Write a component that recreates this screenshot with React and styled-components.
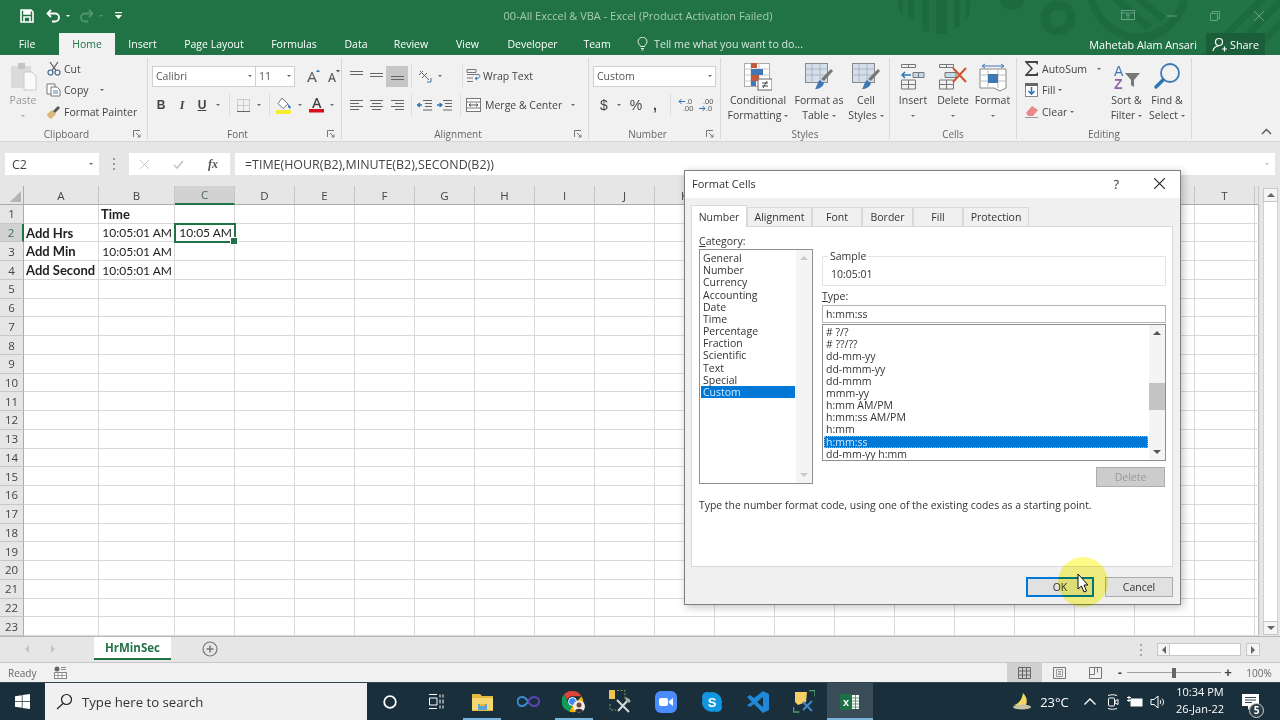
import React from 'react';
import styled, { createGlobalStyle } from 'styled-components';

const ui = '"Open Sans", "Noto Sans", sans-serif';

const Global = createGlobalStyle`
  html, body { margin: 0; padding: 0; width: 1280px; height: 720px; overflow: hidden; background: #e6e6e6; }
  * { box-sizing: border-box; }
  body { font-family: ${ui}; }
`;

const Page = styled.div`
  position: relative;
  width: 1280px;
  height: 720px;
  display: flex;
  flex-direction: column;
  overflow: hidden;
  background: #e6e6e6;
  color: #444;
`;

/* title + tabs */
const GreenHead = styled.header`
  position: relative;
  height: 55px;
  background: #217346;
  overflow: hidden;
`;
const TitleRow = styled.div`
  position: relative;
  height: 31px;
  display: grid;
  grid-template-columns: 1fr auto 1fr;
  align-items: center;
  padding-right: 4px;
`;
const Qat = styled.div`
  display: flex;
  align-items: center;
  padding-left: 18px;
`;
const Slot = styled.div`
  width: ${p => p.$w}px;
  height: ${p => (p.$h ? `${p.$h}px` : 'auto')};
  flex: none;
  display: flex;
  align-items: center;
  justify-content: center;
  background: ${p => p.$bg || 'transparent'};
`;
const DocTitle = styled.div`
  font-size: 11px;
  color: #a6cbb5;
  white-space: nowrap;
`;
const WinControls = styled.div`
  display: flex;
  justify-content: flex-end;
  margin-right: -4px;
`;
const TabRow = styled.nav`
  position: relative;
  height: 24px;
  display: flex;
  align-items: flex-end;
`;
const RibbonTab = styled.div`
  width: ${p => p.$w}px;
  margin-right: ${p => p.$mr || 0}px;
  height: 22px;
  display: flex;
  align-items: center;
  justify-content: center;
  font-size: 10.5px;
  color: ${p => (p.$active ? '#217346' : '#fff')};
  background: ${p => (p.$active ? '#f1f1f1' : 'transparent')};
`;
const TellMe = styled.div`
  display: flex;
  align-items: center;
  gap: 6px;
  height: 22px;
  margin-left: 13px;
  font-size: 10.7px;
  color: #d6e6dc;
`;
const Account = styled.div`
  margin-left: auto;
  display: flex;
  align-items: center;
  height: 22px;
  padding-right: 15px;
  font-size: 10.8px;
  color: #fff;
`;
const Share = styled.div`
  display: flex;
  align-items: center;
  justify-content: center;
  gap: 3px;
  width: 59px;
  height: 22px;
  margin-left: 9px;
  background: #1b5f3a;
`;

/* ribbon */
const Ribbon = styled.section`
  position: relative;
  height: 87px;
  padding-top: 3px;
  display: flex;
  background: #f1f1f1;
  border-bottom: 1px solid #d6d6d6;
`;
const Group = styled.div`
  width: ${p => p.$w}px;
  height: 81px;
  flex: none;
  display: flex;
  flex-direction: column;
  border-right: 1px solid #d8d8d8;
`;
const GroupBody = styled.div`
  height: 69px;
  flex: none;
  display: flex;
  padding-left: ${p => p.$pl || 0}px;
`;
const GroupLabel = styled.div`
  display: grid;
  grid-template-columns: 1fr ${p => (p.$launch ? '14px' : '0')};
  align-items: center;
  height: 12px;
  font-size: 10px;
  color: #666;
  text-align: center;
`;
const BigButton = styled.div`
  width: ${p => p.$w}px;
  flex: none;
  display: flex;
  flex-direction: column;
  align-items: center;
  padding-top: 4px;
  font-size: 10.5px;
  line-height: 15px;
  color: #444;
  text-align: center;
  white-space: nowrap;
`;
const BigIcon = styled.div`
  height: 31px;
  flex: none;
  padding-top: 1px;
  display: flex;
  align-items: flex-start;
  justify-content: center;
`;
const BigLine = styled.div`
  height: 15px;
  flex: none;
  display: flex;
  align-items: center;
  gap: 3px;
`;
const Faded = styled.span`
  color: #999;
`;
const Stack = styled.div`
  display: flex;
  flex-direction: column;
  padding-left: ${p => p.$pl || 0}px;
  width: ${p => (p.$w ? `${p.$w}px` : 'auto')};
  flex: none;
`;
const SmallRow = styled.div`
  height: 21.5px;
  display: flex;
  align-items: center;
  gap: 3px;
  font-size: 10.5px;
  color: #444;
  white-space: nowrap;
`;
const Rows = styled.div`
  display: flex;
  flex-direction: column;
  padding-top: 7px;
  gap: 7px;
`;
const ToolRow = styled.div`
  display: flex;
  align-items: center;
  height: 22px;
  font-size: 10.5px;
  color: #444;
  white-space: nowrap;
  margin-left: ${p => p.$ml || 0}px;
`;
const Combo = styled.div`
  width: ${p => p.$w}px;
  height: 21px;
  flex: none;
  display: flex;
  align-items: center;
  justify-content: space-between;
  padding: 0 3px;
  background: #fff;
  border: 1px solid #d0d0d0;
  margin-left: ${p => (p.$joined ? '-1px' : '0')};
  font-size: 10.5px;
  color: #555;
`;
const Sep = styled.div`
  width: 1px;
  height: 22px;
  background: #dcdcdc;
`;
const Glyph = styled.span`
  font: ${p => (p.$italic ? 'italic' : 'normal')} ${p => p.$weight || 700} ${p => p.$size || 12}px ${p => p.$font || '"Liberation Serif", serif'};
  text-decoration: ${p => (p.$under ? 'underline' : 'none')};
  color: ${p => p.$color || '#444'};
`;
const CollapseSlot = styled.div`
  width: 88px;
  flex: none;
  height: 81px;
  display: flex;
  align-items: flex-end;
  padding: 0 0 4px 69px;
`;

/* formula bar */
const FormulaBar = styled.div`
  display: flex;
  height: 22px;
  margin: 11px 5px;
`;
const WhiteBox = styled.div`
  width: ${p => (p.$w ? `${p.$w}px` : 'auto')};
  flex: ${p => (p.$w ? 'none' : 1)};
  margin-left: ${p => p.$ml || 0}px;
  display: flex;
  align-items: center;
  justify-content: space-between;
  padding: 0 ${p => p.$pr ?? 6}px 0 ${p => p.$pl ?? 6}px;
  background: #fff;
  font: 12.45px ${ui};
  color: #444;
`;

/* sheet */
const SheetArea = styled.div`
  height: 450px;
  display: flex;
`;
const Sheet = styled.div`
  width: 1259px;
  height: 450px;
  display: grid;
  grid-template-columns: 24px 75px 76px repeat(18, 60px) 4px;
  grid-template-rows: 19px repeat(23, 1fr);
  background: #fff;
  border-right: 1px solid #c0c0c0;
  font-family: Lato, "Liberation Sans", sans-serif;
  color: #222;
`;
const Corner = styled.div`
  display: flex;
  align-items: flex-end;
  justify-content: flex-end;
  padding: 0 2px 2px 0;
  background: #e6e6e6;
  border-right: 1px solid #ababab;
  border-bottom: 1px solid #ababab;
`;
const ColHead = styled.div`
  display: flex;
  align-items: center;
  justify-content: center;
  font: 11.5px ${ui};
  color: ${p => (p.$active ? '#3f6f55' : '#444')};
  background: ${p => (p.$active ? '#d2d2d2' : '#e6e6e6')};
  border-right: 1px solid #c6c6c6;
  border-bottom: ${p => (p.$active ? '2px solid #217346' : '1px solid #ababab')};
`;
const RowHead = styled.div`
  display: flex;
  align-items: center;
  justify-content: center;
  font: 11.5px ${ui};
  color: ${p => (p.$active ? '#3f6f55' : '#444')};
  background: ${p => (p.$active ? '#d2d2d2' : '#e6e6e6')};
  border-bottom: 1px solid #c6c6c6;
  border-right: ${p => (p.$active ? '2px solid #217346' : '1px solid #ababab')};
`;
const Cell = styled.div`
  position: relative;
  display: flex;
  align-items: center;
  justify-content: ${p => (p.$right ? 'flex-end' : 'flex-start')};
  padding: 0 2px;
  font-size: ${p => (p.$bold ? 13 : 12)}px;
  font-weight: ${p => (p.$bold ? 700 : 400)};
  white-space: nowrap;
  border-right: 1px solid #d9d9d9;
  border-bottom: 1px solid #d9d9d9;
  ${p =>
    p.$selected &&
    `
    outline: 2px solid #217346;
    outline-offset: -1px;
    z-index: 1;
    &::after {
      content: '';
      position: absolute;
      right: -4px;
      bottom: -4px;
      width: 6px;
      height: 6px;
      background: #217346;
      border: 1px solid #fff;
    }
  `}
`;
const VScroll = styled.div`
  width: 15px;
  height: 447px;
  margin: 2px 0 0 4px;
  display: flex;
  flex-direction: column;
  justify-content: space-between;
  background: #fff;
  border: 1px solid #d0d0d0;
`;
const ScrollCap = styled.div`
  height: 14px;
  display: flex;
  align-items: center;
  justify-content: center;
  background: #f5f5f5;
  border: 1px solid #c8c8c8;
  margin: -1px;
`;
const Triangle = styled.i`
  width: 0;
  height: 0;
  border-left: ${p => p.$s || 4}px solid transparent;
  border-right: ${p => p.$s || 4}px solid transparent;
  ${p => (p.$up ? 'border-bottom' : 'border-top')}: ${p => p.$s || 4}px solid ${p => p.$c || '#666'};
`;
const Side = styled.i`
  width: 0;
  height: 0;
  border-top: 4px solid transparent;
  border-bottom: 4px solid transparent;
  ${p => (p.$left ? 'border-right' : 'border-left')}: 4px solid ${p => p.$c || '#666'};
`;

/* sheet tabs and status */
const SheetBar = styled.div`
  height: 26px;
  display: flex;
  align-items: flex-start;
  padding-left: 14px;
  background: #e6e6e6;
  border-top: 1px solid #b8b8b8;
`;
const SheetTab = styled.div`
  width: 77px;
  height: 23px;
  margin-left: 28px;
  display: flex;
  align-items: center;
  justify-content: center;
  background: #fff;
  border-bottom: 2px solid #217346;
  font-size: 11.5px;
  font-weight: 700;
  color: #217346;
`;
const HScroll = styled.div`
  display: flex;
  align-items: center;
  margin-left: auto;
  margin-right: 20px;
  height: 13px;
  margin-top: 6px;
`;
const HCap = styled.div`
  width: ${p => p.$w}px;
  height: 13px;
  display: flex;
  align-items: center;
  justify-content: center;
  background: #f5f5f5;
  border: 1px solid #c8c8c8;
`;
const HTrack = styled.div`
  width: 71px;
  height: 13px;
  margin-right: 5px;
  background: #fff;
  border: 1px solid #c8c8c8;
  border-left: 0;
`;
const StatusBar = styled.div`
  height: 20px;
  display: flex;
  align-items: center;
  background: #f1f1f1;
  border-top: 1px solid #c8c8c8;
  font-size: 10px;
  color: #666;
`;
const Ready = styled.span`
  width: 54px;
  padding-left: 8px;
`;
const StatusRight = styled.div`
  margin-left: auto;
  display: flex;
  align-items: center;
  height: 100%;
`;
const ViewButton = styled.div`
  width: ${p => p.$w}px;
  height: 100%;
  display: flex;
  align-items: center;
  justify-content: center;
  background: ${p => (p.$active ? '#d0d0d0' : 'transparent')};
`;
const ZoomTrack = styled.div`
  width: 94px;
  display: flex;
  align-items: center;
`;
const ZoomLine = styled.div`
  flex: ${p => p.$grow};
  height: 1px;
  background: #a0a0a0;
`;
const ZoomThumb = styled.div`
  width: 4px;
  height: 10px;
  background: #666;
`;
const Percent = styled.span`
  width: 45px;
  padding-left: 3px;
  text-align: center;
`;

/* taskbar */
const Taskbar = styled.footer`
  height: 38px;
  display: flex;
  align-items: stretch;
  background: #192f3b;
  border-top: 1px solid #33454f;
`;
const Search = styled.div`
  width: 322px;
  display: flex;
  align-items: center;
  gap: 9px;
  padding-left: 11px;
  background: #f0f0f0;
  font-size: 13.2px;
  color: #333;
`;
const TaskIcon = styled.div`
  position: relative;
  width: 46px;
  display: flex;
  align-items: center;
  justify-content: center;
  background: ${p => (p.$active ? '#3a4c57' : 'transparent')};
  ${p =>
    p.$running &&
    `
    &::after {
      content: '';
      position: absolute;
      left: ${p.$active ? 0 : 4}px;
      right: ${p.$active ? 0 : 4}px;
      bottom: 0;
      height: 2px;
      background: #79b4dc;
    }
  `}
`;
const Tray = styled.div`
  margin-left: auto;
  display: flex;
  align-items: center;
  padding-right: 8px;
  color: #fff;
`;
const Temp = styled(Slot)`
  font-size: 13px;
`;
const Clock = styled.div`
  width: 62px;
  padding-left: 6px;
  margin-bottom: 4px;
  text-align: center;
  font-size: 11px;
  line-height: 17px;
`;
const Notify = styled.div`
  position: relative;
  width: 44px;
  display: flex;
  align-items: center;
  justify-content: center;
`;
const NotifyBadge = styled.span`
  position: absolute;
  left: 21px;
  top: 9px;
  width: 15px;
  height: 15px;
  border-radius: 50%;
  display: flex;
  align-items: center;
  justify-content: center;
  background: #2a3c47;
  border: 1px solid #cfcfcf;
  font-size: 10px;
  font-weight: 700;
  color: #fff;
`;

/* dialog */
const Dialog = styled.div`
  position: absolute;
  left: 684px;
  top: 170px;
  width: 497px;
  height: 435px;
  display: flex;
  flex-direction: column;
  background: #f0f0f0;
  border: 1px solid #7f7f7f;
  box-shadow: 2px 2px 8px rgba(0, 0, 0, 0.25);
  font-size: 10.5px;
  color: #333;
  z-index: 2;
`;
const DialogHead = styled.div`
  height: 27px;
  flex: none;
  display: flex;
  align-items: center;
  padding: 0 0 2px 7px;
  background: #fff;
  font-size: 11px;
`;
const HeadIcons = styled.div`
  margin-left: auto;
  display: flex;
  align-items: center;
  gap: 35px;
  padding-right: 15px;
  font-size: 13px;
`;
const DialogTabs = styled.div`
  height: 28px;
  flex: none;
  display: flex;
  align-items: flex-end;
  margin-left: 6px;
`;
const DialogTab = styled.div`
  width: ${p => p.$w}px;
  height: ${p => (p.$active ? 22 : 19)}px;
  display: flex;
  align-items: center;
  justify-content: center;
  background: ${p => (p.$active ? '#fff' : '#f0f0f0')};
  border: 1px solid #d9d9d9;
  border-bottom: 0;
  margin-bottom: ${p => (p.$active ? -1 : 0)}px;
  position: relative;
  z-index: ${p => (p.$active ? 1 : 0)};
`;
const Panel = styled.div`
  height: 341px;
  flex: none;
  margin: 0 7px 0 6px;
  padding: 7px 6px 0 7px;
  display: grid;
  grid-template-columns: 114px 344px;
  grid-template-rows: auto 1fr;
  column-gap: 9px;
  align-content: start;
  background: #fff;
  border: 1px solid #d9d9d9;
`;
const Label = styled.div`
  height: ${p => p.$h || 15}px;
  margin-top: ${p => p.$mt || 0}px;
  margin-bottom: ${p => p.$mb || 0}px;
  display: flex;
  align-items: center;
  u { text-underline-offset: 1px; }
`;
const ListBox = styled.div`
  height: ${p => p.$h}px;
  display: flex;
  background: #fff;
  border: 1px solid #8f8f8f;
  margin-top: ${p => p.$mt || 0}px;
`;
const Items = styled.div`
  flex: 1;
  padding: ${p => p.$pt}px 1px 0 1px;
  overflow: hidden;
`;
const Item = styled.div`
  height: 12.18px;
  line-height: 12.18px;
  padding-left: ${p => p.$pl || 2}px;
  white-space: nowrap;
  background: ${p => (p.$selected ? '#0078d7' : 'transparent')};
  color: ${p => (p.$selected ? '#cfe8ff' : '#333')};
  outline: ${p => (p.$focused ? '1px dotted #9fb8cc' : 'none')};
  outline-offset: -1px;
`;
const ListScroll = styled.div`
  width: 16px;
  flex: none;
  display: flex;
  flex-direction: column;
  background: #f4f4f4;
`;
const ScrollArrow = styled.div`
  height: 16px;
  display: flex;
  align-items: center;
  justify-content: center;
`;
const ScrollTrack = styled.div`
  flex: 1;
  padding-top: ${p => p.$top || 0}px;
`;
const ScrollThumb = styled.div`
  height: 27px;
  background: #c4c4c4;
`;
const Fieldset = styled.fieldset`
  height: 37px;
  margin: 15px 0 0;
  padding: 0 7px;
  border: 1px solid #e3e3e3;
  font-size: 10.5px;
  legend { padding: 0 2px; margin-left: -2px; line-height: 14px; }
`;
const SampleValue = styled.div`
  line-height: 14px;
  margin-top: 4px;
  margin-left: 1px;
`;
const TypeInput = styled.div`
  height: 18px;
  margin-top: 2px;
  padding-left: 3px;
  display: flex;
  align-items: center;
  border: 1px solid #b5b5b5;
`;
const PushButton = styled.div`
  width: ${p => p.$w || 68}px;
  height: 20px;
  flex: none;
  display: flex;
  align-items: center;
  justify-content: center;
  background: ${p => (p.$disabled ? '#cccccc' : '#e1e1e1')};
  color: ${p => (p.$disabled ? '#9a9a9a' : '#333')};
  border: ${p => (p.$primary ? '2px solid #0078d7' : '1px solid #adadad')};
  margin-left: ${p => p.$ml || 0}px;
`;
const DeleteRow = styled.div`
  display: flex;
  justify-content: flex-end;
  margin-top: 6px;
  padding-right: 1px;
`;
const Hint = styled.div`
  grid-column: 1 / -1;
  margin-top: 11px;
  font-size: 10.42px;
  line-height: 14px;
`;
const DialogFoot = styled.div`
  flex: 1;
  display: flex;
  justify-content: flex-end;
  padding: 10px 7px 0 0;
`;
const Spotlight = styled.div`
  position: absolute;
  left: 1058px;
  top: 557px;
  width: 50px;
  height: 50px;
  border-radius: 50%;
  background: #fdfb86;
  mix-blend-mode: multiply;
  z-index: 3;
`;
const Cursor = styled.svg`
  position: absolute;
  left: 1077px;
  top: 573px;
  z-index: 4;
`;

/* icons */
const Arrow = ({ c = '#666' }) => <Triangle $s={2.5} $c={c} />;

const SaveIcon = () => (
  <svg width="18" height="18" viewBox="0 0 18 18" fill="none" stroke="#fff" strokeWidth="1.6">
    <path d="M3 3h10l2 2v10H3z" />
    <path d="M6 3v4h6V3" fill="#fff" />
    <path d="M6 15v-5h6v5" />
  </svg>
);
const UndoIcon = ({ c = '#fff' }) => (
  <svg width="16" height="14" viewBox="0 0 16 14" fill="none" stroke={c} strokeWidth="1.8">
    <path d="M5 1L1.5 4.5 5 8" />
    <path d="M2 4.5h7a4 4 0 0 1 0 8H6" />
  </svg>
);
const RedoIcon = () => (
  <svg width="16" height="14" viewBox="0 0 16 14" fill="none" stroke="#4f9570" strokeWidth="1.8">
    <path d="M11 1l3.5 3.5L11 8" />
    <path d="M14 4.5H7a4 4 0 0 0 0 8h3" />
  </svg>
);
const QatMore = () => (
  <svg width="7" height="8" viewBox="0 0 7 8">
    <path d="M0 0h7v1.3H0zM0 3h7L3.5 7z" fill="#fff" />
  </svg>
);
const TitleArt = styled.svg`
  position: absolute;
  left: 860px;
  top: 0;
`;
const TitleDecor = () => (
  <TitleArt width="420" height="55" viewBox="0 0 420 55" fill="#1e6a40">
    <path d="M38 0h5v16l-5-6zM48 0h6v22l-6-4zM62 0h7v32l-7-1zM76 0h11v34H76zM94 0h6v26l-6 3zM106 0h4v14l-4 6z" />
    <path d="M140 0h24c0 6-6 10-12 10s-12-4-12-10z" />
    <circle cx="198" cy="18" r="13" fill="none" stroke="#1e6a40" strokeWidth="9" />
    <path d="M228 0c6 22 24 38 50 44 28-4 46-22 50-44h-8c-4 18-20 32-42 34-22-3-38-16-42-34z" />
    <path d="M252 0l34 30 6-5L262 0zM275 0l26 22 5-6L285 0z" />
    <path d="M350 55L406 0h-9l-56 55zM372 55l48-48v-9l-57 57zM394 55l26-26v-9l-35 35z" />
  </TitleArt>
);
const RibbonDisplayIcon = () => (
  <svg width="14" height="11" viewBox="0 0 14 11" fill="none" stroke="#62a382">
    <rect x=".5" y=".5" width="13" height="9" />
    <path d="M.5 3h13M7 9V4.5M5 6l2-2 2 2" />
  </svg>
);
const MinIcon = () => (
  <svg width="10" height="10" viewBox="0 0 10 10">
    <path d="M0 5h10" stroke="#62a382" />
  </svg>
);
const RestoreIcon = () => (
  <svg width="10" height="10" viewBox="0 0 10 10" fill="none" stroke="#62a382">
    <path d="M.5 2.5h7v7h-7zM2.5 2.5v-2h7v7h-2" />
  </svg>
);
const CloseIcon = ({ c = '#62a382', s = 10 }) => (
  <svg width={s} height={s} viewBox="0 0 10 10" stroke={c}>
    <path d="M0 0l10 10M10 0L0 10" />
  </svg>
);
const BulbIcon = () => (
  <svg width="11" height="14" viewBox="0 0 11 14" fill="none" stroke="#e4eee8">
    <path d="M3.5 9.5C3 7.5 1 7 1 4.7a4.5 4.5 0 0 1 9 0c0 2.3-2 2.8-2.5 4.8zM4 11.5h3M4.5 13h2" />
  </svg>
);
const ShareIcon = () => (
  <svg width="15" height="15" viewBox="0 0 15 15" fill="none" stroke="#fff" strokeWidth="1.2">
    <circle cx="7" cy="5" r="3.5" />
    <path d="M1 14c.5-3 2.5-5 6-5M10 12h5M12.5 9.5v5" />
  </svg>
);
const PasteIcon = () => (
  <svg width="28" height="28" viewBox="0 0 28 28">
    <rect x="2" y="3" width="20" height="22" fill="#dadada" />
    <rect x="9" y="0" width="7" height="6" fill="#c4c4c4" />
    <path d="M15 9h8l4 4v14H15z" fill="#fafafa" stroke="#cacaca" />
  </svg>
);
const CutIcon = () => (
  <svg width="14" height="15" viewBox="0 0 14 15" fill="none" stroke="#44658c" strokeWidth="1.2">
    <circle cx="3.5" cy="11.5" r="2.5" />
    <circle cx="10.5" cy="11.5" r="2.5" />
    <path d="M5 9.5L11 1M9 9.5L3 1" stroke="#555" />
  </svg>
);
const CopyIcon = () => (
  <svg width="15" height="14" viewBox="0 0 15 14" fill="#fff" stroke="#777">
    <path d="M1 1h8v10H1z" />
    <path d="M5 4h6l3 3v6H5z" />
    <path d="M7 8h5M7 10h5" stroke="#5a7fa8" />
  </svg>
);
const BrushIcon = () => (
  <svg width="15" height="14" viewBox="0 0 15 14">
    <path d="M1 9l5-4 4 4-5 5C3 13 1 11 1 9z" fill="#d8b978" />
    <path d="M7 6l5-5 2 2-5 5z" fill="#555" />
  </svg>
);
const Launcher = () => (
  <svg width="8" height="8" viewBox="0 0 8 8" fill="none" stroke="#777">
    <path d="M.5 7V.5H7M3 3l4 4M7 4.5V7H4.500" />
  </svg>
);
const BordersIcon = () => (
  <svg width="13" height="13" viewBox="0 0 13 13" fill="none" stroke="#a9a9a9" strokeDasharray="1 1">
    <path d="M.5.5h12v12H.5zM6.500.5v12M.5 6.500h12" />
    <path d="M0 12.500h13" stroke="#666" strokeDasharray="none" />
  </svg>
);
const FillIcon = () => (
  <svg width="16" height="17" viewBox="0 0 16 17">
    <path d="M6 1l6 6-5 4.500-5-5z" fill="#fff" stroke="#777" />
    <path d="M12 7l3 3-1 2-2-2z" fill="#3f78b5" />
    <rect x="0" y="13" width="15" height="4" fill="#f4ee2e" />
  </svg>
);
const FontColorIcon = () => (
  <svg width="15" height="16" viewBox="0 0 15 16">
    <path d="M3 11L7 1h1.500l4 10h-1.800l-1-2.800H5.800l-1 2.800zM6.300 6.800h3L7.800 3z" fill="#444" />
    <rect x="0" y="12" width="15" height="3.500" fill="#d6101c" />
  </svg>
);
const GrowIcon = ({ small }) => (
  <svg width="13" height="14" viewBox="0 0 13 14">
    <path
      d={small ? 'M1 13L4.500 4h1L9 13H7.500l-.8-2.500H3.300L2.500 13zM3.800 9.200h2.500L5 5.500z' : 'M0 13L4.500 3h1L10 13H8.300l-1-2.700H2.700l-1 2.700zM3.200 9h3.600L5 4.600z'}
      fill="#555"
    />
    <path d={small ? 'M9 1h4l-2 2.500z' : 'M9 3l2-2.500L13 3z'} fill={small ? '#555' : '#3f78b5'} />
  </svg>
);
const AlignLines = ({ lines, y = 1 }) => (
  <svg width="13" height="12" viewBox="0 0 13 12" stroke="#666">
    {lines.map(([a, b], i) => (
      <path key={i} d={`M${a} ${y + i * 3 + 0.5}H${b}`} />
    ))}
  </svg>
);
const OrientIcon = () => (
  <svg width="14" height="14" viewBox="0 0 14 14" fill="none" stroke="#666">
    <path d="M2 2l9 9M1 6l4-4M4 9l5-5" />
    <path d="M9 13h4V9" stroke="#3f78b5" />
  </svg>
);
const IndentIcon = ({ rev }) => (
  <svg width="15" height="11" viewBox="0 0 15 11">
    <path d="M6 .5h9M8 3.500h7M8 6.500h7M6 10H15" stroke="#666" />
    <path d={rev ? 'M0 5h5M3 3L.5 5 3 7' : 'M0 5h5M2.500 3L5 5 2.500 7'} stroke="#2e75b6" fill="none" strokeWidth="1.3" />
  </svg>
);
const WrapIcon = () => (
  <svg width="16" height="14" viewBox="0 0 16 14" fill="none" stroke="#777">
    <path d="M1 .5h9v3H1zM1 5.500h12M1 9h6M1 12.500h6" />
    <path d="M13 5.500c2 2 0 4-3 4M11 8l-2 1.500 2 1.500" stroke="#2e75b6" />
  </svg>
);
const MergeIcon = () => (
  <svg width="15" height="14" viewBox="0 0 15 14" fill="#fff" stroke="#777">
    <rect x=".5" y=".5" width="14" height="13" />
    <path d="M.5 4h14M.5 10h14" />
    <path d="M3 7h9M5 5.500L3 7l2 1.500M10 5.500L12 7l-2 1.500" fill="none" stroke="#555" />
  </svg>
);
const DecimalIcon = ({ rev }) => (
  <svg width="18" height="15" viewBox="0 0 18 15" fontFamily="Liberation Sans" fontSize="7.5" fill="#555">
    {rev ? (
      <>
        <text x="6" y="6">.00</text>
        <text x="9" y="13">.0</text>
        <path d="M2 10.500h6M5.500 8l2.500 2.500L5.500 13" stroke="#2e75b6" fill="none" />
      </>
    ) : (
      <>
        <text x="9" y="6">.0</text>
        <text x="6" y="13">.00</text>
        <path d="M8 3.500H2M4.500 1L2 3.500 4.500 6" stroke="#2e75b6" fill="none" />
      </>
    )}
  </svg>
);
const CondFormatIcon = () => (
  <svg width="28" height="28" viewBox="0 0 28 28">
    <rect x=".5" y=".5" width="25" height="23" fill="#fff" stroke="#aaa" />
    <path d="M.5 6h25M.5 12h25M.5 18h25M7 .5v23M15 .5v23" stroke="#c9c9c9" />
    <rect x="7" y="0" width="6" height="5" fill="#c55a3b" />
    <rect x="7" y="6" width="12" height="6" fill="#3f78b5" />
    <rect x="7" y="12" width="8" height="6" fill="#c55a3b" />
    <rect x="7" y="18" width="5" height="5" fill="#3f78b5" />
    <rect x="14" y="16" width="14" height="11" fill="#fff" stroke="#666" />
    <path d="M18 20h6M18 23h6M23 18l-4 7" stroke="#444" />
  </svg>
);
const FormatTableIcon = () => (
  <svg width="28" height="28" viewBox="0 0 28 28">
    <rect x=".5" y=".5" width="22" height="19" fill="#d4dfe9" stroke="#888" />
    <path d="M.5 6h22M.5 12h22M7 .5v19M15 .5v19" stroke="#a9b5bf" />
    <path d="M26 6l2 2-9 10-3-2z" fill="#777" />
    <path d="M15 17l4 3c-1 4-5 6-9 6 2-2 2-7 5-9z" fill="#3f78b5" />
  </svg>
);
const InsertIcon = () => (
  <svg width="26" height="28" viewBox="0 0 26 28" fill="none" stroke="#777">
    <path d="M1.500 1.500h14v3h-14zM8.500 1.500v3M1.500 17h14v9h-14zM1.500 21.500h14M8.500 17v9" />
    <path d="M13 9.500h11v5H13zM18.500 9.500v5" fill="#c6d9ea" />
    <path d="M11 12H2M5 9l-3 3 3 3" stroke="#2e75b6" strokeWidth="1.5" />
  </svg>
);
const DeleteIcon = () => (
  <svg width="30" height="28" viewBox="0 0 30 28" fill="none" stroke="#777">
    <path d="M1.500 1.500h14v3h-14zM8.500 1.500v3M1.500 17h14v9h-14zM1.500 21.500h14M8.500 17v9" />
    <path d="M7 9.500h11v5H7z" fill="#c6d9ea" />
    <path d="M15 5l13 14M28 5L15 19" stroke="#d0532c" strokeWidth="2" />
  </svg>
);
const FormatIcon = () => (
  <svg width="28" height="30" viewBox="0 0 28 30">
    <path d="M1 6h26v19l-6 3-6-3H1z" fill="#fff" stroke="#888" />
    <path d="M1 12h26M1 18h26M9 6v19M19 6v19" stroke="#bbb" />
    <rect x="9" y="11" width="10" height="9" fill="#3f78b5" />
    <path d="M3 3h22M6 1L3 3l3 2M22 1l3 2-3 2" stroke="#3f78b5" fill="none" />
  </svg>
);
const SigmaIcon = () => (
  <svg width="15" height="15" viewBox="0 0 15 15">
    <path d="M1 0h13v3.500h-1L12 2H4l5 5.500L4 13h8l1-1.500h1V15H1v-1l6-6.500L1 1z" fill="#444" />
  </svg>
);
const FillDownIcon = () => (
  <svg width="15" height="14" viewBox="0 0 15 14">
    <rect x="1.500" y=".5" width="12" height="13" fill="#fff" stroke="#888" />
    <rect x="1" y="0" width="13" height="3" fill="#666" />
    <path d="M7.500 4v7M4.500 8l3 3 3-3" stroke="#2e75b6" strokeWidth="1.6" fill="none" />
  </svg>
);
const EraserIcon = () => (
  <svg width="15" height="13" viewBox="0 0 15 13">
    <path d="M2 8l6-7 6 4-5 6H4z" fill="#ea8a88" />
    <path d="M1 12.500h13" stroke="#999" />
  </svg>
);
const SortIcon = () => (
  <svg width="28" height="30" viewBox="0 0 28 30">
    <text x="1" y="13" fontSize="14" fontFamily="Liberation Sans" fill="#3f78b5">A</text>
    <text x="1" y="26" fontFamily="Liberation Sans" fontSize="14" fontWeight="700" fill="#8f64a8">Z</text>
    <path d="M12 10h15l-6 7v7l-3-2v-5z" fill="#777" />
  </svg>
);
const FindIcon = () => (
  <svg width="28" height="28" viewBox="0 0 28 28" fill="none">
    <circle cx="17" cy="10" r="9" stroke="#3f78b5" strokeWidth="1.800" />
    <path d="M10 17l-7 7" stroke="#2e75b6" strokeWidth="3.500" strokeLinecap="round" />
  </svg>
);
const Kebab = ({ c = '#999' }) => (
  <svg width="3" height="12" viewBox="0 0 3 12" fill={c}>
    <rect width="2" height="2" />
    <rect y="5" width="2" height="2" />
    <rect y="10" width="2" height="2" />
  </svg>
);
const FxX = () => <CloseIcon c="#c4c4c4" s={9} />;
const FxCheck = () => (
  <svg width="11" height="9" viewBox="0 0 11 9" fill="none" stroke="#c4c4c4" strokeWidth="1.6">
    <path d="M1 5l3 3 6-7" />
  </svg>
);
const AddSheetIcon = () => (
  <svg width="16" height="16" viewBox="0 0 16 16" fill="none" stroke="#777" strokeWidth="1.2">
    <circle cx="8" cy="8" r="7" />
    <path d="M4.500 8h7M8 4.500v7" strokeWidth="1.500" />
  </svg>
);
const MacroIcon = () => (
  <svg width="13" height="13" viewBox="0 0 13 13">
    <circle cx="3" cy="3" r="2.500" fill="#666" />
    <path d="M7 1.500h5M7 3.500h5" stroke="#888" />
    <rect x=".5" y="6.500" width="12" height="6" fill="#fff" stroke="#888" />
    <path d="M.5 9.500h12M4 6.500v6M8 6.500v6" stroke="#999" />
  </svg>
);
const NormalIcon = () => (
  <svg width="13" height="12" viewBox="0 0 13 12" fill="none" stroke="#666">
    <path d="M.5.500h12v11H.5zM.5 4h12M.5 8h12M4.500.500v11M8.500.500v11" />
  </svg>
);
const LayoutIcon = () => (
  <svg width="13" height="12" viewBox="0 0 13 12" fill="none" stroke="#777">
    <path d="M.5.500h12v11H.5z" />
    <path d="M3.500 2.500h6v7h-6zM5 4.500h3M5 6h3M5 7.500h3" stroke="#999" />
  </svg>
);
const BreakIcon = () => (
  <svg width="13" height="12" viewBox="0 0 13 12" fill="none" stroke="#777">
    <path d="M.5.500h12v11H.5zM.5 7.500h5M5.500.500v7M8.500.500v5" />
  </svg>
);
const WindowsIcon = () => (
  <svg width="15" height="15" viewBox="0 0 15 15" fill="#fff">
    <path d="M0 2.200L6.800 1.200V7H0zM7.500 1.100L15 0v7H7.500zM0 7.800h6.800v5.900L0 12.800zM7.500 7.800H15V15l-7.500-1.100z" />
  </svg>
);
const SearchIcon = () => (
  <svg width="17" height="17" viewBox="0 0 17 17" fill="none" stroke="#222" strokeWidth="1.200">
    <circle cx="10.500" cy="6.500" r="5" />
    <path d="M7 10.500L1 16" />
  </svg>
);
const CortanaIcon = () => (
  <svg width="14" height="14" viewBox="0 0 14 14" fill="none" stroke="#fff" strokeWidth="1.800">
    <circle cx="7" cy="7" r="5.800" />
  </svg>
);
const TaskViewIcon = () => (
  <svg width="15" height="15" viewBox="0 0 15 15" fill="none" stroke="#fff">
    <path d="M0 .5h8M0 14.500h8M.5 4h7.500v7H.5zM11 .500v3M11 5.500v4M11 11.500v3M14 .500v3M14 5.500v4M14 11.500v3" />
  </svg>
);
const ExplorerIcon = () => (
  <svg width="21" height="18" viewBox="0 0 21 18">
    <path d="M0 1h8l2 2h11v15H0z" fill="#e6b73d" />
    <rect x="0" y="5" width="21" height="12" fill="#f5d670" />
    <rect x="6" y="11" width="9" height="6" fill="#5aa3d6" />
    <rect x="8" y="11" width="5" height="2" fill="#e6b73d" />
  </svg>
);
const InfinityIcon = () => (
  <svg width="23" height="11" viewBox="0 0 23 11" fill="none" strokeWidth="2">
    <path d="M11 5.500C9 2 7 1 5 1a4.500 4.500 0 0 0 0 9c2 0 4-1 6-4.500" stroke="#3d8fd1" />
    <path d="M11 5.500C13 2 15 1 17.500 1a4.500 4.500 0 0 1 0 9c-2.500 0-4.500-1-6.500-4.500" stroke="#5e45b8" />
  </svg>
);
const ChromeIcon = () => (
  <svg width="24" height="22" viewBox="0 0 24 22">
    <path d="M10.500 0A10.500 10.500 0 0 1 19.600 5.300H10.500A5.500 5.500 0 0 0 5.300 9L2 3.600A10.500 10.500 0 0 1 10.500 0z" fill="#db4437" />
    <path d="M2 3.600L6.500 12a5 5 0 0 0 4 3.500L7 20.500A10.500 10.500 0 0 1 2 3.600z" fill="#0f9d58" />
    <path d="M19.600 5.300a10.500 10.500 0 0 1-12.600 15.200l4-6z" fill="#f4b400" />
    <circle cx="10.500" cy="10.500" r="4" fill="#4285f4" stroke="#fff" />
    <circle cx="17" cy="15.500" r="6" fill="#efe9e2" />
    <circle cx="17" cy="14" r="2.500" fill="#704c35" />
    <path d="M13 20c1-3 7-3 8 0a6 6 0 0 1-8 0z" fill="#333" />
  </svg>
);
const ToolsIcon = () => (
  <svg width="22" height="23" viewBox="0 0 22 23">
    <rect x="0" y="0" width="6" height="9" fill="#eec54e" />
    <path d="M8 .500h8v8M1 14v6h6" fill="none" stroke="#7fa05a" strokeDasharray="2 1.500" />
    <path d="M8 10l12 12M20 9L9 21" stroke="#d8d8d8" strokeWidth="2" />
    <path d="M17 7l5 4-2 2-4-4z" fill="#aaa" />
  </svg>
);
const ZoomIcon = () => (
  <svg width="22" height="22" viewBox="0 0 22 22">
    <rect width="22" height="22" rx="6" fill="#4a8cff" />
    <rect x="4" y="7" width="9" height="8" rx="2" fill="#fff" />
    <path d="M14 10l4-3v8l-4-3z" fill="#fff" />
  </svg>
);
const SkypeIcon = () => (
  <svg width="22" height="22" viewBox="0 0 22 22">
    <circle cx="11" cy="11" r="10" fill="#1197e0" />
    <circle cx="6" cy="6" r="5" fill="#1197e0" />
    <circle cx="16" cy="16" r="5" fill="#1197e0" />
    <text x="11" y="15.500" textAnchor="middle" fontFamily="Liberation Sans" fontWeight="700" fontSize="13" fill="#fff">S</text>
  </svg>
);
const VsCodeIcon = () => (
  <svg width="22" height="22" viewBox="0 0 22 22">
    <path d="M16 0l6 3v16l-6 3-9-9-4 3-3-2 5-3-5-5 3-2 4 3z" fill="#1f88d8" />
    <path d="M16 6l-6 5 6 5z" fill="#192f3b" />
  </svg>
);
const ToolsTwoIcon = () => (
  <svg width="22" height="23" viewBox="0 0 22 23">
    <path d="M2 2h12l-1 10-8 3-3-3z" fill="#f4cf63" />
    <path d="M16 .500h6v6M.5 17v5h6" fill="none" stroke="#4e9a6b" strokeWidth="1.500" />
    <path d="M10 12l9 9M19 11l-9 9" stroke="#3f87c9" strokeWidth="2" />
  </svg>
);
const ExcelIcon = () => (
  <svg width="20" height="18" viewBox="0 0 20 18">
    <rect x="0" y="1" width="12" height="16" fill="#1e7145" />
    <text x="6" y="13" textAnchor="middle" fontFamily="Liberation Sans" fontWeight="700" fontSize="11" fill="#fff">x</text>
    <rect x="12" y="2" width="7" height="14" fill="#fff" />
    <path d="M12 5h7M12 8h7M12 11h7M12 14h7M15.500 2v14" stroke="#1e7145" strokeWidth=".7" />
  </svg>
);
const MoonIcon = () => (
  <svg width="22" height="18" viewBox="0 0 22 18">
    <path d="M11 0c3 3 5 7 3 12H2c5-1 8-6 9-12z" fill="#f4d75e" />
    <ellipse cx="10" cy="14" rx="9" ry="2.500" fill="#c9c2aa" />
  </svg>
);
const ChevronUp = () => (
  <svg width="12" height="7" viewBox="0 0 12 7" fill="none" stroke="#fff" strokeWidth="1.300">
    <path d="M.5 6.500L6 1l5.500 5.500" />
  </svg>
);
const CameraTray = () => (
  <svg width="12" height="16" viewBox="0 0 12 16" fill="none" stroke="#fff">
    <rect x="1.500" y="4" width="6" height="8" rx="1" />
    <path d="M8 7l3-1.500v5L8 9zM1 1.500c3-1 6-1 9 0M1 14.500c3 1 6 1 9 0" />
  </svg>
);
const BatteryTray = () => (
  <svg width="16" height="12" viewBox="0 0 16 12">
    <rect x="4" y="3" width="11" height="7" fill="#fff" stroke="#fff" />
    <path d="M0 1.500h4M0 4.500h4M2 0v6" stroke="#fff" />
  </svg>
);
const VolumeTray = () => (
  <svg width="16" height="14" viewBox="0 0 16 14" fill="none" stroke="#fff">
    <path d="M1 4.500h3L8 1v12L4 9.500H1zM10 5c1 1 1 3 0 4M12 3.500c2 2 2 5 0 7" />
  </svg>
);
const NotifyIcon = () => (
  <svg width="17" height="16" viewBox="0 0 17 16">
    <path d="M0 0h17v12H9l-3 4v-4H0z" fill="#fff" />
    <path d="M3 3.500h11M3 6h11M3 8.500h7" stroke="#33454f" />
  </svg>
);

const columns = 'ABCDEFGHIJKLMNOPQRST'.split('');
const cells = {
  'B1': { text: 'Time', bold: true },
  'A2': { text: 'Add Hrs', bold: true },
  'B2': { text: '10:05:01 AM', right: true },
  'C2': { text: '10:05 AM', right: true, selected: true },
  'A3': { text: 'Add Min', bold: true },
  'B3': { text: '10:05:01 AM', right: true },
  'A4': { text: 'Add Second', bold: true },
  'B4': { text: '10:05:01 AM', right: true },
};
const categories = ['General', 'Number', 'Currency', 'Accounting', 'Date', 'Time', 'Percentage', 'Fraction', 'Scientific', 'Text', 'Special', 'Custom'];
const types = ['# ?/?', '# ??/??', 'dd-mm-yy', 'dd-mmm-yy', 'dd-mmm', 'mmm-yy', 'h:mm AM/PM', 'h:mm:ss AM/PM', 'h:mm', 'h:mm:ss', 'dd-mm-yy h:mm'];
const dialogTabs = [['Number', 56], ['Alignment', 65], ['Font', 50], ['Border', 51], ['Fill', 50], ['Protection', 66]];
const ribbonTabs = [['Insert', 55], ['Page Layout', 88], ['Formulas', 72], ['Data', 52], ['Review', 58], ['View', 55], ['Developer', 75], ['Team', 54]];

const SheetGrid = () => (
  <Sheet>
    <Corner>
      <svg width="11" height="11" viewBox="0 0 11 11"><path d="M11 0v11H0z" fill="#b4b4b4" /></svg>
    </Corner>
    {columns.map(c => (
      <ColHead key={c} $active={c === 'C'}>{c}</ColHead>
    ))}
    <ColHead />
    {Array.from({ length: 23 }, (_, i) => i + 1).map(r => (
      <React.Fragment key={r}>
        <RowHead $active={r === 2}>{r}</RowHead>
        {columns.map(c => {
          const cell = cells[`${c}${r}`] || {};
          return (
            <Cell key={c} $bold={cell.bold} $right={cell.right} $selected={cell.selected}>
              {cell.text}
            </Cell>
          );
        })}
        <Cell />
      </React.Fragment>
    ))}
  </Sheet>
);

const FormatCells = () => (
  <Dialog>
    <DialogHead>
      Format Cells
      <HeadIcons>
        <span>?</span>
        <CloseIcon c="#222" s={11} />
      </HeadIcons>
    </DialogHead>
    <DialogTabs>
      {dialogTabs.map(([name, w]) => (
        <DialogTab key={name} $w={w} $active={name === 'Number'}>{name}</DialogTab>
      ))}
    </DialogTabs>
    <Panel>
      <div>
        <Label $h={13} $mb={2}><span><u>C</u>ategory:</span></Label>
        <ListBox $h={235}>
          <Items $pt={2}>
            {categories.map(c => (
              <Item key={c} $selected={c === 'Custom'}>{c}</Item>
            ))}
          </Items>
          <ListScroll>
            <ScrollArrow><Triangle $up $s={4} $c="#c8c8c8" /></ScrollArrow>
            <ScrollTrack />
            <ScrollArrow><Triangle $s={4} $c="#c8c8c8" /></ScrollArrow>
          </ListScroll>
        </ListBox>
      </div>
      <div>
        <Fieldset>
          <legend>Sample</legend>
          <SampleValue>10:05:01</SampleValue>
        </Fieldset>
        <Label $mt={2}><span><u>T</u>ype:</span></Label>
        <TypeInput>h:mm:ss</TypeInput>
        <ListBox $h={137} $mt={1}>
          <Items $pt={1}>
            {types.map(t => (
              <Item key={t} $selected={t === 'h:mm:ss'} $focused={t === 'h:mm:ss'}>{t}</Item>
            ))}
          </Items>
          <ListScroll>
            <ScrollArrow><Triangle $up $s={4} $c="#555" /></ScrollArrow>
            <ScrollTrack $top={42}><ScrollThumb /></ScrollTrack>
            <ScrollArrow><Triangle $s={4} $c="#555" /></ScrollArrow>
          </ListScroll>
        </ListBox>
        <DeleteRow><PushButton $w={69} $disabled>Delete</PushButton></DeleteRow>
      </div>
      <Hint>Type the number format code, using one of the existing codes as a starting point.</Hint>
    </Panel>
    <DialogFoot>
      <PushButton $primary>OK</PushButton>
      <PushButton $ml={11}>Cancel</PushButton>
    </DialogFoot>
  </Dialog>
);

export default function App() {
  return (
    <Page>
      <Global />
      <GreenHead>
        <TitleDecor />
        <TitleRow>
          <Qat>
            <SaveIcon />
            <Slot $w={10} />
            <UndoIcon />
            <Slot $w={12}><Arrow c="#fff" /></Slot>
            <Slot $w={4} />
            <RedoIcon />
            <Slot $w={14}><Arrow c="#4f9570" /></Slot>
            <Slot $w={7} />
            <QatMore />
          </Qat>
          <DocTitle>00-All Exccel &amp; VBA - Excel (Product Activation Failed)</DocTitle>
          <WinControls>
            <Slot $w={44}><RibbonDisplayIcon /></Slot>
            <Slot $w={43}><MinIcon /></Slot>
            <Slot $w={44}><RestoreIcon /></Slot>
            <Slot $w={43}><CloseIcon /></Slot>
          </WinControls>
        </TitleRow>
        <TabRow>
          <RibbonTab $w={54} $mr={5}>File</RibbonTab>
          <RibbonTab $w={56} $active>Home</RibbonTab>
          {ribbonTabs.map(([name, w]) => (
            <RibbonTab key={name} $w={w}>{name}</RibbonTab>
          ))}
          <TellMe>
            <BulbIcon />
            Tell me what you want to do...
          </TellMe>
          <Account>
            Mahetab Alam Ansari
            <Share><ShareIcon />Share</Share>
          </Account>
        </TabRow>
      </GreenHead>

      <Ribbon>
        <Group $w={148}>
          <GroupBody $pl={8}>
            <BigButton $w={30}>
              <BigIcon><PasteIcon /></BigIcon>
              <Faded>Paste</Faded>
              <Slot $w={10} $h={15}><Arrow c="#aaa" /></Slot>
            </BigButton>
            <Stack $pl={8}>
              <SmallRow><Slot $w={15}><CutIcon /></Slot>Cut</SmallRow>
              <SmallRow><Slot $w={15}><CopyIcon /></Slot>Copy<Slot $w={20}><Arrow /></Slot></SmallRow>
              <SmallRow><Slot $w={15}><BrushIcon /></Slot>Format Painter</SmallRow>
            </Stack>
          </GroupBody>
          <GroupLabel $launch><span>Clipboard</span><Launcher /></GroupLabel>
        </Group>

        <Group $w={194}>
          <GroupBody>
            <Rows>
              <ToolRow $ml={4}>
                <Combo $w={104}>Calibri<Arrow /></Combo>
                <Combo $w={40} $joined>11<Arrow /></Combo>
                <Slot $w={8} />
                <Slot $w={20}><GrowIcon /></Slot>
                <Slot $w={20}><GrowIcon small /></Slot>
              </ToolRow>
              <ToolRow $ml={2}>
                <Slot $w={22}><Glyph $font='"Liberation Sans", sans-serif'>B</Glyph></Slot>
                <Slot $w={20}><Glyph $italic>I</Glyph></Slot>
                <Slot $w={20}><Glyph $under $font='"Liberation Sans", sans-serif'>U</Glyph></Slot>
                <Slot $w={12}><Arrow /></Slot>
                <Slot $w={10}><Sep /></Slot>
                <Slot $w={18}><BordersIcon /></Slot>
                <Slot $w={13}><Arrow /></Slot>
                <Slot $w={8}><Sep /></Slot>
                <Slot $w={22}><FillIcon /></Slot>
                <Slot $w={9}><Arrow /></Slot>
                <Slot $w={24}><FontColorIcon /></Slot>
                <Slot $w={7}><Arrow /></Slot>
              </ToolRow>
            </Rows>
          </GroupBody>
          <GroupLabel $launch><span>Font</span><Launcher /></GroupLabel>
        </Group>

        <Group $w={247}>
          <GroupBody>
            <Rows>
              <ToolRow $ml={4}>
                <Slot $w={20}><AlignLines lines={[[0, 13], [0, 13]]} y={1} /></Slot>
                <Slot $w={20}><AlignLines lines={[[0, 13], [0, 13]]} y={3} /></Slot>
                <Slot $w={22} $h={21} $bg="#c6c6c6"><AlignLines lines={[[0, 13], [0, 13]]} y={6} /></Slot>
                <Slot $w={6}><Sep /></Slot>
                <Slot $w={22}><OrientIcon /></Slot>
                <Slot $w={8}><Arrow /></Slot>
                <Slot $w={16} />
                <Slot $w={5}><Sep /></Slot>
                <Slot $w={1} />
                <WrapIcon />
                <Slot $w={1} />
                Wrap Text
              </ToolRow>
              <ToolRow $ml={4}>
                <Slot $w={20}><AlignLines lines={[[0, 13], [0, 9], [0, 13], [0, 9]]} /></Slot>
                <Slot $w={20}><AlignLines lines={[[0, 13], [2, 11], [0, 13], [2, 11]]} /></Slot>
                <Slot $w={22}><AlignLines lines={[[0, 13], [4, 13], [0, 13], [4, 13]]} /></Slot>
                <Slot $w={6}><Sep /></Slot>
                <Slot $w={20}><IndentIcon rev /></Slot>
                <Slot $w={20}><IndentIcon /></Slot>
                <Slot $w={4} />
                <Slot $w={5}><Sep /></Slot>
                <Slot $w={3} />
                <MergeIcon />
                <Slot $w={4} />
                Merge &amp; Center
                <Slot $w={22}><Arrow /></Slot>
              </ToolRow>
            </Rows>
          </GroupBody>
          <GroupLabel $launch><span>Alignment</span><Launcher /></GroupLabel>
        </Group>

        <Group $w={132}>
          <GroupBody>
            <Rows>
              <ToolRow $ml={4}>
                <Combo $w={123}>Custom<Arrow /></Combo>
              </ToolRow>
              <ToolRow $ml={6}>
                <Slot $w={18}><Glyph $size={14} $weight={400} $font='"Liberation Sans", sans-serif'>$</Glyph></Slot>
                <Slot $w={12}><Arrow /></Slot>
                <Slot $w={22}><Glyph $size={14} $weight={400} $font='"Liberation Sans", sans-serif'>%</Glyph></Slot>
                <Slot $w={16}><Glyph $size={14} $font='"Liberation Sans", sans-serif'>,</Glyph></Slot>
                <Slot $w={14}><Sep /></Slot>
                <Slot $w={18}><DecimalIcon /></Slot>
                <Slot $w={2} />
                <Slot $w={18}><DecimalIcon rev /></Slot>
              </ToolRow>
            </Rows>
          </GroupBody>
          <GroupLabel $launch><span>Number</span><Launcher /></GroupLabel>
        </Group>

        <Group $w={169}>
          <GroupBody>
            <BigButton $w={74}>
              <BigIcon><CondFormatIcon /></BigIcon>
              Conditional
              <BigLine>Formatting<Arrow /></BigLine>
            </BigButton>
            <BigButton $w={48}>
              <BigIcon><FormatTableIcon /></BigIcon>
              Format as
              <BigLine>Table<Arrow /></BigLine>
            </BigButton>
            <BigButton $w={46}>
              <BigIcon><FormatTableIcon /></BigIcon>
              Cell
              <BigLine>Styles<Arrow /></BigLine>
            </BigButton>
          </GroupBody>
          <GroupLabel><span>Styles</span></GroupLabel>
        </Group>

        <Group $w={127}>
          <GroupBody $pl={3}>
            <BigButton $w={40}>
              <BigIcon><InsertIcon /></BigIcon>
              Insert
              <Slot $w={10} $h={15}><Arrow /></Slot>
            </BigButton>
            <BigButton $w={40}>
              <BigIcon><DeleteIcon /></BigIcon>
              Delete
              <Slot $w={10} $h={15}><Arrow /></Slot>
            </BigButton>
            <BigButton $w={39}>
              <BigIcon><FormatIcon /></BigIcon>
              Format
              <Slot $w={10} $h={15}><Arrow /></Slot>
            </BigButton>
          </GroupBody>
          <GroupLabel><span>Cells</span></GroupLabel>
        </Group>

        <Group $w={175}>
          <GroupBody $pl={7}>
            <Stack $w={82}>
              <SmallRow><Slot $w={15}><SigmaIcon /></Slot>AutoSum<Slot $w={18}><Arrow /></Slot></SmallRow>
              <SmallRow><Slot $w={15}><FillDownIcon /></Slot>Fill<Arrow /></SmallRow>
              <SmallRow><Slot $w={15}><EraserIcon /></Slot>Clear<Arrow /></SmallRow>
            </Stack>
            <BigButton $w={41}>
              <BigIcon><SortIcon /></BigIcon>
              Sort &amp;
              <BigLine>Filter<Arrow /></BigLine>
            </BigButton>
            <BigButton $w={40}>
              <BigIcon><FindIcon /></BigIcon>
              Find &amp;
              <BigLine>Select<Arrow /></BigLine>
            </BigButton>
          </GroupBody>
          <GroupLabel><span>Editing</span></GroupLabel>
        </Group>
        <CollapseSlot>
          <svg width="11" height="7" viewBox="0 0 11 7" fill="none" stroke="#555" strokeWidth="1.400"><path d="M1 6l4.500-4.500L10 6" /></svg>
        </CollapseSlot>
      </Ribbon>

      <FormulaBar>
        <WhiteBox $w={94} $pl={7}>C2<Arrow /></WhiteBox>
        <Slot $w={30}><Kebab /></Slot>
        <WhiteBox $w={101} $pl={11} $pr={12}>
          <FxX />
          <FxCheck />
          <Glyph $italic $size={12} $weight={700} $color="#555">fx</Glyph>
        </WhiteBox>
        <WhiteBox $ml={5} $pl={10}>
          =TIME(HOUR(B2),MINUTE(B2),SECOND(B2))
          <Arrow c="#bbb" />
        </WhiteBox>
      </FormulaBar>

      <SheetArea>
        <SheetGrid />
        <VScroll>
          <ScrollCap><Triangle $up $s={4} /></ScrollCap>
          <ScrollCap><Triangle $s={4} /></ScrollCap>
        </VScroll>
      </SheetArea>

      <SheetBar>
        <Slot $w={26} $h={24}><Side $left $c="#c4c4c4" /></Slot>
        <Slot $w={26} $h={24}><Side $c="#c4c4c4" /></Slot>
        <SheetTab>HrMinSec</SheetTab>
        <Slot $w={30} />
        <Slot $w={18} $h={24}><AddSheetIcon /></Slot>
        <HScroll>
          <Kebab c="#aaa" />
          <Slot $w={14} />
          <HCap $w={13}><Side $left /></HCap>
          <HTrack />
          <HCap $w={14}><Side /></HCap>
        </HScroll>
      </SheetBar>

      <StatusBar>
        <Ready>Ready</Ready>
        <MacroIcon />
        <StatusRight>
          <ViewButton $w={35} $active><NormalIcon /></ViewButton>
          <ViewButton $w={35}><LayoutIcon /></ViewButton>
          <ViewButton $w={36}><BreakIcon /></ViewButton>
          <Slot $w={14}><Glyph $size={13} $font='"Liberation Sans", sans-serif'>-</Glyph></Slot>
          <ZoomTrack>
            <ZoomLine $grow={1} />
            <ZoomThumb />
            <ZoomLine $grow={1} />
          </ZoomTrack>
          <Slot $w={14}><Glyph $size={13} $font='"Liberation Sans", sans-serif'>+</Glyph></Slot>
          <Percent>100%</Percent>
        </StatusRight>
      </StatusBar>

      <Taskbar>
        <Slot $w={45}><WindowsIcon /></Slot>
        <Search><SearchIcon />Type here to search</Search>
        <TaskIcon><CortanaIcon /></TaskIcon>
        <TaskIcon><TaskViewIcon /></TaskIcon>
        <TaskIcon $running><ExplorerIcon /></TaskIcon>
        <TaskIcon><InfinityIcon /></TaskIcon>
        <TaskIcon $running><ChromeIcon /></TaskIcon>
        <TaskIcon><ToolsIcon /></TaskIcon>
        <TaskIcon><ZoomIcon /></TaskIcon>
        <TaskIcon><SkypeIcon /></TaskIcon>
        <TaskIcon><VsCodeIcon /></TaskIcon>
        <TaskIcon><ToolsTwoIcon /></TaskIcon>
        <TaskIcon $running $active><ExcelIcon /></TaskIcon>
        <Tray>
          <Slot $w={24}><MoonIcon /></Slot>
          <Temp $w={39}>23°C</Temp>
          <Slot $w={32}><ChevronUp /></Slot>
          <Slot $w={14}><CameraTray /></Slot>
          <Slot $w={30}><BatteryTray /></Slot>
          <Slot $w={16}><VolumeTray /></Slot>
          <Clock>10:34 PM<br />26-Jan-22</Clock>
          <Notify>
            <NotifyIcon />
            <NotifyBadge>5</NotifyBadge>
          </Notify>
        </Tray>
      </Taskbar>

      <FormatCells />
      <Spotlight />
      <Cursor width="12" height="20" viewBox="0 0 12 20">
        <path d="M1 1v15l3.500-3 2.500 6 2.500-1-2.500-6H11z" fill="#fff" stroke="#111" />
      </Cursor>
    </Page>
  );
}
